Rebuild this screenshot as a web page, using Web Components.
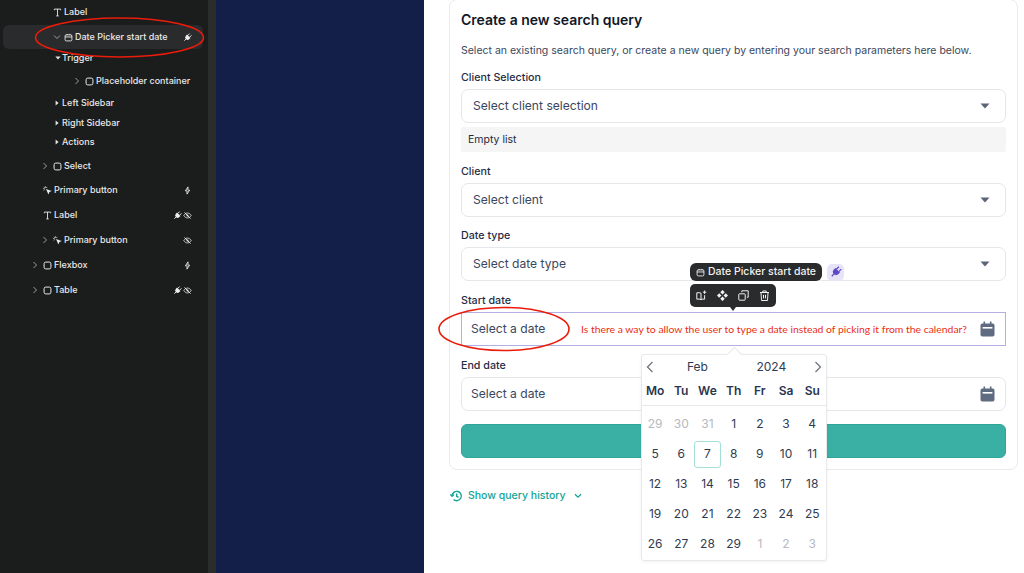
<!DOCTYPE html>
<html>
<head>
<meta charset="utf-8">
<style>
    html, body { margin: 0; padding: 0; background: #fff; }
</style>
</head>
<body>
<app-page></app-page>
<script>
const ICONS = {
    text: '<path d="M1.5 2.5V1.2h7v1.3M5 1.2v7.6M3.6 8.8h2.8" fill="none" stroke="currentColor" stroke-width="1"/>',
    cal: '<rect x="1.2" y="2" width="7.6" height="6.8" rx="1.4" fill="none" stroke="currentColor"/><path d="M1.2 4.4h7.6M3.4 1v1.6M6.6 1v1.6" stroke="currentColor" fill="none"/>',
    box: '<rect x="1.2" y="1.2" width="7.6" height="7.6" rx="1.8" fill="none" stroke="currentColor" stroke-width="1.1"/>',
    click: '<path d="M3.400 3.200L9.700 5.600 7.100 6.700 6 9.500z" fill="currentColor"/><path d="M2.800.4v1.600M.2 2.900h1.600M.9 1l1.100 1.100M4.700 1L3.700 2.100M.9 4.900L2 3.800" stroke="currentColor" stroke-width=".9" fill="none"/>',
    plug: '<g transform="rotate(45 5 5)"><path d="M3.600.2v3M6.400.2v3" stroke="currentColor" stroke-width="1" fill="none"/><path d="M2.300 3h5.400v1.800a2.700 2.700 0 0 1-5.400 0z" fill="currentColor"/><path d="M5 7v3" stroke="currentColor" stroke-width="1" fill="none"/></g>',
    bolt: '<path d="M5.600 1L2.600 5.400h2L4.400 9l3-4.400h-2z" fill="none" stroke="currentColor" stroke-width="1"/>',
    eye: '<path d="M.9 5C2 3.200 3.400 2.300 5 2.300S8 3.200 9.100 5C8 6.800 6.600 7.700 5 7.700S2 6.800 .9 5z" fill="none" stroke="currentColor" stroke-width=".9"/><circle cx="5" cy="5" r="1.100" fill="currentColor"/><path d="M1.600 1.600l6.800 6.800" stroke="currentColor" stroke-width="1"/>'
};

function icon(name, size) {
    return `<svg width="${size}" height="${size}" viewBox="0 0 10 10">${ICONS[name]}</svg>`;
}

class TreeRow extends HTMLElement {
    connectedCallback() {
        const indent = this.getAttribute("indent") || 0;
        const h = this.getAttribute("h") || 18;
        const top = this.getAttribute("top") || 0;
        const caret = this.getAttribute("caret");
        const name = this.getAttribute("icon");
        const trail = (this.getAttribute("trail") || "").split(" ").filter(Boolean);
        let caretHtml = "";
        if (caret === "right") {
            caretHtml = '<svg class="caret" width="6" height="8" viewBox="0 0 6 8"><path d="M1.500 1l3 3-3 3" fill="none" stroke="#9a9b9b" stroke-width="1"/></svg>';
        } else if (caret === "down") {
            caretHtml = '<svg class="caret" width="8" height="6" viewBox="0 0 8 6"><path d="M1 1.500l3 3 3-3" fill="none" stroke="#9a9b9b" stroke-width="1"/></svg>';
        } else if (caret === "tri-right") {
            caretHtml = '<svg class="caret" width="4" height="6" viewBox="0 0 4 6"><path d="M.6.6L3.600 3 .6 5.400z" fill="#e6e6e6"/></svg>';
        } else if (caret === "tri-down") {
            caretHtml = '<svg class="caret" width="6" height="4" viewBox="0 0 6 4"><path d="M.4.6h5.200L3 3.600z" fill="#e6e6e6"/></svg>';
        }
        this.attachShadow({ mode: "open" }).innerHTML = `
            <style>
                :host { display: flex; align-items: center; height: ${h}px; margin-top: ${top}px; padding-left: ${indent}px; padding-right: 16px; color: #e9e9e9; }
                :host([selected]) { background: #2a2b2c; border-radius: 6px; margin: ${top}px 5px 0 3px; padding-left: ${indent - 3}px; padding-right: 11px; }
                .caret { flex: none; margin-right: ${this.getAttribute("cgap") || 4}px; }
                .ic { flex: none; display: flex; margin-right: 2px; }
                .name { flex: 1; font: 500 9px/12px Inter, sans-serif; white-space: nowrap; }
                .trail { display: flex; gap: 1px; color: #eee; }
                .trail span { display: flex; width: 9px; justify-content: center; }
            </style>
            ${caretHtml}
            ${name ? `<span class="ic">${icon(name, 9)}</span>` : ""}
            <span class="name"><slot></slot></span>
            <span class="trail">${trail.map(t => `<span>${icon(t, 9)}</span>`).join("")}</span>
        `;
    }
}

class TreePanel extends HTMLElement {
    constructor() {
        super();
        this.attachShadow({ mode: "open" }).innerHTML = `
            <style>
                :host { display: block; flex: none; width: 208px; height: 573px; background: #1b1c1c; border-right: 8px solid #2b2c2c; box-sizing: content-box; overflow: hidden; }
            </style>
            <tree-row indent="53" top="3" icon="text">Label</tree-row>
            <tree-row indent="53" top="4" h="24" icon="cal" caret="down" cgap="3" selected trail="plug">Date Picker start date</tree-row>
            <tree-row indent="55" caret="tri-down" cgap="1">Trigger</tree-row>
            <tree-row indent="74" top="5" caret="right" cgap="5" icon="box">Placeholder container</tree-row>
            <tree-row indent="55" top="4" caret="tri-right" cgap="3">Left Sidebar</tree-row>
            <tree-row indent="55" top="2" caret="tri-right" cgap="3">Right Sidebar</tree-row>
            <tree-row indent="55" top="1" caret="tri-right" cgap="3">Actions</tree-row>
            <tree-row indent="42" top="6" caret="right" cgap="5" icon="box">Select</tree-row>
            <tree-row indent="43" top="6" icon="click" trail="bolt">Primary button</tree-row>
            <tree-row indent="43" top="7" icon="text" trail="plug eye">Label</tree-row>
            <tree-row indent="42" top="7" caret="right" cgap="5" icon="click" trail="eye">Primary button</tree-row>
            <tree-row indent="32" top="7" caret="right" cgap="5" icon="box" trail="bolt">Flexbox</tree-row>
            <tree-row indent="32" top="7" caret="right" cgap="5" icon="box" trail="plug eye">Table</tree-row>
        `;
    }
}

class FormField extends HTMLElement {
    constructor() {
        super();
        this.attachShadow({ mode: "open" }).innerHTML = `
            <style>
                :host { display: flex; flex-direction: column; gap: 4px; margin-top: 13px; }
                label { font: 500 10.7px/14px Inter, sans-serif; color: #1f2c44; }
            </style>
            <label></label>
            <slot></slot>
        `;
    }
    connectedCallback() {
        this.shadowRoot.querySelector("label").textContent = this.getAttribute("label");
    }
}

class SelectBox extends HTMLElement {
    constructor() {
        super();
        this.attachShadow({ mode: "open" }).innerHTML = `
            <style>
                :host { display: flex; align-items: center; justify-content: space-between; height: 34px; box-sizing: border-box; padding: 0 15px 0 11px; border: 1px solid #e6e7ea; border-radius: 7px; background: #fff; font: 400 12.1px/16px Inter, sans-serif; color: #3a475e; }
                svg { display: block; }
            </style>
            <slot></slot>
            <svg width="10" height="6" viewBox="0 0 10 6"><path d="M.5.5h9L5 5.500z" fill="#5b6579"/></svg>
        `;
    }
}

class DateBox extends HTMLElement {
    constructor() {
        super();
        this.attachShadow({ mode: "open" }).innerHTML = `
            <style>
                :host { display: flex; align-items: center; justify-content: space-between; height: 34px; box-sizing: border-box; padding: 0 10px 0 9px; border: 1px solid #e6e7ea; border-radius: 7px; background: #fff; font: 400 12.1px/16px Inter, sans-serif; color: #3a475e; }
                :host([active]) { border-color: #b4afe2; border-radius: 0; }
                svg { display: block; }
            </style>
            <slot></slot>
            <svg width="15" height="16" viewBox="0 0 15 16">
                <path d="M3.500 .5h1.600v2h4.800v-2h1.600v2h1.200A1.800 1.800 0 0 1 14.500 4.300v9.400a1.800 1.800 0 0 1-1.800 1.800H2.300A1.800 1.800 0 0 1 .5 13.700V4.300A1.800 1.800 0 0 1 2.300 2.500h1.200z" fill="#5f6b80"/>
                <rect x="2.600" y="6" width="9.800" height="1.600" fill="#fff"/>
            </svg>
        `;
    }
}

class QueryCard extends HTMLElement {
    constructor() {
        super();
        this.attachShadow({ mode: "open" }).innerHTML = `
            <style>
                :host { display: block; box-sizing: border-box; height: 471px; margin-top: -1px; padding: 11px 11px 10px; border: 1px solid #e9eaec; border-radius: 8px; background: #fff; }
                h2 { margin: 0; font: 600 14px/18px Inter, sans-serif; color: #111827; }
                p { margin: 15px 0 0; font: 400 10.5px/14px Inter, sans-serif; color: #3b475d; }
                .empty { margin-top: 4px; height: 25px; display: flex; align-items: center; padding: 1px 0 0 7px; box-sizing: border-box; background: #f5f5f6; border-radius: 2px; font: 400 10.5px/14px Inter, sans-serif; color: #1f2937; }
                .go { height: 34px; margin-top: 13px; box-sizing: border-box; background: #3ab0a5; border: 1px solid #2fa598; border-radius: 6px; }
            </style>
            <h2>Create a new search query</h2>
            <p>Select an existing search query, or create a new query by entering your search parameters here below.</p>
            <form-field label="Client Selection"><select-box>Select client selection</select-box></form-field>
            <div class="empty">Empty list</div>
            <form-field label="Client"><select-box>Select client</select-box></form-field>
            <form-field style="margin-top:12px" label="Date type"><select-box>Select date type</select-box></form-field>
            <form-field label="Start date"><date-box active>Select a date</date-box></form-field>
            <form-field label="End date"><date-box>Select a date</date-box></form-field>
            <div class="go"></div>
        `;
    }
}

class HistoryLink extends HTMLElement {
    constructor() {
        super();
        this.attachShadow({ mode: "open" }).innerHTML = `
            <style>
                :host { display: flex; align-items: center; gap: 5px; margin-top: 19px; color: #14a497; font: 500 10.5px/14px Inter, sans-serif; margin-left: 1px; }
                span { margin-right: 3px; }
                svg { display: block; }
            </style>
            <svg width="13" height="14" viewBox="0 0 14 14" fill="none" stroke="currentColor" stroke-width="1.500">
                <path d="M2.200 7A5 5 0 1 1 3.800 10.700"/><path d="M.4 5.300L2.200 7.300 4.200 5.500"/><path d="M7.200 4.200V7.300L9.200 8.500"/>
            </svg>
            <span>Show query history</span>
            <svg width="8" height="6" viewBox="0 0 8 6" fill="none" stroke="currentColor" stroke-width="1.300"><path d="M1 1.200l3 3 3-3"/></svg>
        `;
    }
}

class DatePopup extends HTMLElement {
    constructor() {
        super();
        const heads = ["Mo", "Tu", "We", "Th", "Fr", "Sa", "Su"];
        const days = [[29, 1], [30, 1], [31, 1]];
        for (let i = 1; i <= 29; i++) days.push([i, 0]);
        days.push([1, 1], [2, 1], [3, 1]);
        this.attachShadow({ mode: "open" }).innerHTML = `
            <style>
                :host { position: absolute; left: 641px; top: 354px; width: 186px; height: 207px; box-sizing: border-box; background: #fff; border: 1px solid #e8e9eb; border-radius: 3px; box-shadow: 0 1px 3px rgba(20,30,50,.06); font-family: Inter, sans-serif; color: #2f3b52; }
                .arrow { position: absolute; left: 87px; top: -6px; width: 10px; height: 10px; background: #fff; border-left: 1px solid #e8e9eb; border-top: 1px solid #e8e9eb; transform: rotate(45deg); }
                .nav { position: relative; display: flex; align-items: center; height: 23px; padding: 0 4px; font-size: 12px; }
                .nav b { font-weight: 400; }
                .nav svg { display: block; }
                .month { margin-left: 33px; width: 70px; }
                .year { width: 58px; }
                .heads { display: grid; grid-template-columns: repeat(7, 26.2px); height: 28px; box-sizing: border-box; padding-bottom: 2px; align-items: center; justify-items: center; border-bottom: 1px solid #e8e9eb; font: 600 12px/16px Inter, sans-serif; color: #2a3650; }
                .days { display: grid; grid-template-columns: repeat(7, 26.2px); grid-auto-rows: 30px; align-items: center; justify-items: center; font: 400 12px/16px Inter, sans-serif; margin-top: 3px; }
                .days span { display: flex; align-items: center; justify-content: center; width: 27px; height: 27px; box-sizing: border-box; }
                .off { color: #b6b9c0; }
                .today { border: 1px solid #a3e0d8; border-radius: 3px; }
            </style>
            <div class="arrow"></div>
            <div class="nav">
                <svg width="8" height="12" viewBox="0 0 8 12" fill="none" stroke="#70757f" stroke-width="1.300"><path d="M6.500 1L1.500 6l5 5"/></svg>
                <b class="month">Feb</b>
                <b class="year">2024</b>
                <svg width="8" height="12" viewBox="0 0 8 12" fill="none" stroke="#70757f" stroke-width="1.300"><path d="M1.500 1l5 5-5 5"/></svg>
            </div>
            <div class="heads">${heads.map(h => `<span>${h}</span>`).join("")}</div>
            <div class="days">${days.map(d => `<span class="${d[1] ? "off" : ""}${!d[1] && d[0] === 7 ? "today" : ""}">${d[0]}</span>`).join("")}</div>
        `;
    }
}

class ElementChip extends HTMLElement {
    constructor() {
        super();
        this.attachShadow({ mode: "open" }).innerHTML = `
            <style>
                :host { position: absolute; left: 690px; top: 263px; display: flex; align-items: center; gap: 5px; }
                .tag { display: flex; align-items: center; gap: 3px; width: 132px; height: 18px; box-sizing: border-box; padding-left: 6px; background: #2a2b2c; color: #f1f1f1; border-radius: 6px; font: 500 10.5px/14px Inter, sans-serif; white-space: nowrap; }
                .plug { display: flex; align-items: center; justify-content: center; width: 17px; height: 17px; background: #e7e4f8; border-radius: 5px; color: #5a49c9; }
                svg { display: block; }
            </style>
            <div class="tag">${icon("cal", 9)}<span>Date Picker start date</span></div>
            <div class="plug">${icon("plug", 12)}</div>
        `;
    }
}

class ElementToolbar extends HTMLElement {
    constructor() {
        super();
        this.attachShadow({ mode: "open" }).innerHTML = `
            <style>
                :host { position: absolute; left: 690px; top: 284px; display: flex; align-items: center; justify-content: space-between; box-sizing: border-box; width: 86px; height: 23px; padding: 0 6px 0 6px; background: #2a2b2c; border-radius: 5px; color: #f1f1f1; }
                :host::after { content: ""; position: absolute; left: 40px; bottom: -4px; border: 3px solid transparent; border-bottom: 0; border-top: 4px solid #2a2b2c; }
                svg { display: block; }
            </style>
            <svg width="11" height="11" viewBox="0 0 11 11" fill="none" stroke="currentColor"><path d="M5 3.200C4 2.600 2.500 2.500 .8 2.800v6.400c1.700-.3 3.200-.2 4.200.4 1-.6 2.400-.7 3.600-.4V5.200M5 3.200v6.400M8.600 .5v3.400M6.900 2.200h3.400"/></svg>
            <svg width="11" height="11" viewBox="0 0 11 11" fill="currentColor"><rect x="3.900" y=".6" width="3.200" height="3.200" transform="rotate(45 5.500 2.200)"/><rect x="3.900" y="7.200" width="3.200" height="3.200" transform="rotate(45 5.500 8.800)"/><rect x=".6" y="3.900" width="3.200" height="3.200" transform="rotate(45 2.200 5.500)"/><rect x="7.200" y="3.900" width="3.200" height="3.200" transform="rotate(45 8.800 5.500)"/></svg>
            <svg width="11" height="11" viewBox="0 0 11 11" fill="none" stroke="currentColor"><rect x=".8" y="3.800" width="6.400" height="6.400" rx=".6"/><path d="M3.800 2.200V.8h6.400v6.400H8.800"/></svg>
            <svg width="11" height="11" viewBox="0 0 11 11" fill="none" stroke="currentColor"><path d="M1 2.500h9M3.800 2.500V1h3.400v1.500M2 2.500l.5 8h6l.5-8M4.500 4.800v3.600M6.500 4.800v3.600"/></svg>
        `;
    }
}

class AppPage extends HTMLElement {
    constructor() {
        super();
        this.attachShadow({ mode: "open" }).innerHTML = `
            <style>
                :host { display: flex; position: relative; width: 1024px; height: 573px; overflow: hidden; background: #fff; }
                .navy { flex: none; width: 208px; background: #141f49; }
                main { flex: 1; padding: 0 6px 0 25px; min-width: 0; }
                .note { position: absolute; left: 581px; top: 321px; font: 400 10.4px/16px Lato, sans-serif; color: #ea2e14; white-space: nowrap; }
                .rings { position: absolute; left: 0; top: 0; pointer-events: none; }
            </style>
            <tree-panel></tree-panel>
            <div class="navy"></div>
            <main>
                <query-card></query-card>
                <history-link></history-link>
            </main>
            <element-chip></element-chip>
            <element-toolbar></element-toolbar>
            <date-popup></date-popup>
            <div class="note">Is there a way to allow the user to type a date instead of picking it from the calendar?</div>
            <svg class="rings" width="1024" height="573" fill="none" stroke="#ea1c0c" stroke-width="1.600">
                <ellipse cx="119.500" cy="37.500" rx="84" ry="19.500"/>
                <ellipse cx="504" cy="329" rx="65" ry="21.500"/>
            </svg>
        `;
    }
}

customElements.define("tree-row", TreeRow);
customElements.define("tree-panel", TreePanel);
customElements.define("form-field", FormField);
customElements.define("select-box", SelectBox);
customElements.define("date-box", DateBox);
customElements.define("query-card", QueryCard);
customElements.define("history-link", HistoryLink);
customElements.define("date-popup", DatePopup);
customElements.define("element-chip", ElementChip);
customElements.define("element-toolbar", ElementToolbar);
customElements.define("app-page", AppPage);
</script>
</body>
</html>
